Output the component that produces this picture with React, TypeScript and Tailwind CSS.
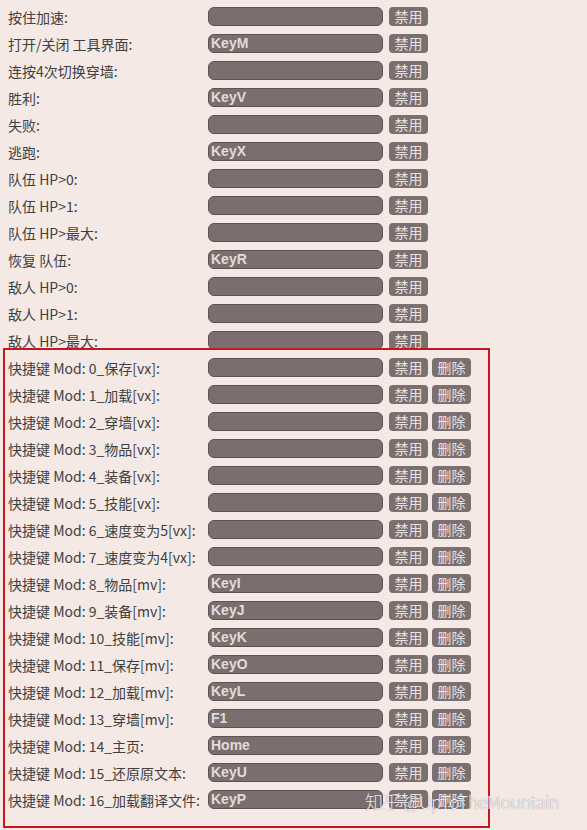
import React from "react";

type Row = { label: string; value: string; del?: boolean };

const top: Row[] = [
  { label: "按住加速:", value: "" },
  { label: "打开/关闭 工具界面:", value: "KeyM" },
  { label: "连按4次切换穿墙:", value: "" },
  { label: "胜利:", value: "KeyV" },
  { label: "失败:", value: "" },
  { label: "逃跑:", value: "KeyX" },
  { label: "队伍 HP>0:", value: "" },
  { label: "队伍 HP>1:", value: "" },
  { label: "队伍 HP>最大:", value: "" },
  { label: "恢复 队伍:", value: "KeyR" },
  { label: "敌人 HP>0:", value: "" },
  { label: "敌人 HP>1:", value: "" },
  { label: "敌人 HP>最大:", value: "" },
];

const mods: [string, string][] = [
  ["0_保存[vx]", ""],
  ["1_加载[vx]", ""],
  ["2_穿墙[vx]", ""],
  ["3_物品[vx]", ""],
  ["4_装备[vx]", ""],
  ["5_技能[vx]", ""],
  ["6_速度变为5[vx]", ""],
  ["7_速度变为4[vx]", ""],
  ["8_物品[mv]", "KeyI"],
  ["9_装备[mv]", "KeyJ"],
  ["10_技能[mv]", "KeyK"],
  ["11_保存[mv]", "KeyO"],
  ["12_加载[mv]", "KeyL"],
  ["13_穿墙[mv]", "F1"],
  ["14_主页", "Home"],
  ["15_还原原文本", "KeyU"],
  ["16_加载翻译文件", "KeyP"],
];

const rows: Row[] = [
  ...top,
  ...mods.map(([l, v]) => ({ label: `快捷键 Mod: ${l}:`, value: v, del: true })),
];

function Btn({ children }: { children: React.ReactNode }) {
  return (
    <div className="h-[19px] w-[39px] rounded-[4px] bg-[#7b6f6f] text-[#e9e1e1] text-[14px] leading-[19px] text-center">
      {children}
    </div>
  );
}

export default function App() {
  return (
    <div
      className="relative min-h-[830px] w-full bg-[#f5e9e5] pt-[3px] text-[#404040]"
      style={{ fontFamily: '"Noto Sans CJK SC", "Noto Sans", sans-serif' }}
    >
      {rows.map((r, i) => (
        <div key={i} className="flex h-[27px] items-center">
          <div className="w-[208px] shrink-0 pl-[8px] text-[14px] leading-none whitespace-nowrap">
            {r.label}
          </div>
          <div
            className="h-[19px] w-[175px] shrink-0 rounded-[6px] border border-[#5e5353] bg-[#7a6e6e] pl-[2px] text-[14px] font-bold leading-[17px] text-[#e2dcdc]"
            style={{ fontFamily: '"Liberation Sans", Arial, sans-serif' }}
          >
            {r.value}
          </div>
          <div className="ml-[6px] flex gap-[4px]">
            <Btn>禁用</Btn>
            {r.del && <Btn>删除</Btn>}
          </div>
        </div>
      ))}
      <div className="pointer-events-none absolute left-[3px] top-[348px] h-[480px] w-[487px] border-2 border-[#c9151e]" />
      <div
        className="pointer-events-none absolute left-[365px] top-[792px] text-[18px] font-light leading-none tracking-[-0.6px] text-white/90 whitespace-nowrap"
        style={{ textShadow: "0 0 1px rgba(80,70,70,0.8)" }}
      >
        知乎 @UpToTheMountain
      </div>
    </div>
  );
}
